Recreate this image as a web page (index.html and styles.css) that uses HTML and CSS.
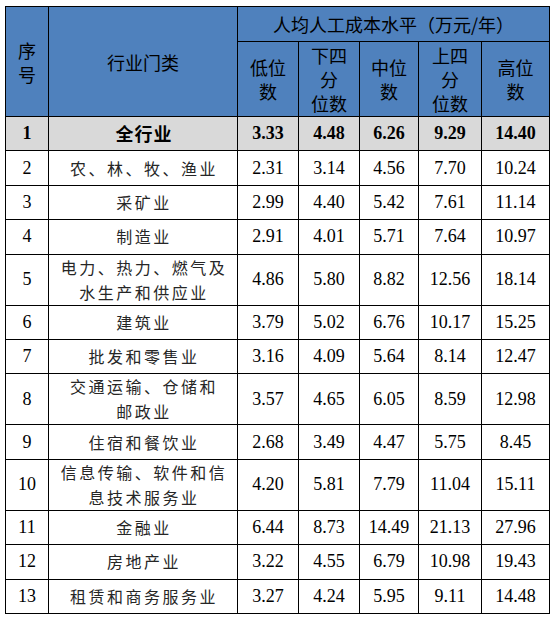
FILE: index.html
```html
<!DOCTYPE html>
<html lang="zh-CN">
  <head>
    <meta charset="UTF-8" />
    <title>人均人工成本水平</title>
    <link rel="stylesheet" href="styles.css">
  </head>
  <body>
    <!-- Labour cost table by industry -->
    <table class="cost-table">
      <colgroup>
        <col class="c-no" />
        <col class="c-name" />
        <col class="c-v1" />
        <col class="c-v2" />
        <col class="c-v3" />
        <col class="c-v4" />
        <col class="c-v5" />
      </colgroup>
      <thead>
        <tr class="head-top">
          <th rowspan="2">序<br>号</th>
          <th rowspan="2">行业门类</th>
          <th colspan="5">人均人工成本水平（万元/年）</th>
        </tr>
        <tr class="head-sub">
          <th>低位<br>数</th>
          <th>下四<br>分<br>位数</th>
          <th>中位<br>数</th>
          <th>上四<br>分<br>位数</th>
          <th>高位<br>数</th>
        </tr>
      </thead>
      <tbody>
        <tr class="total">
          <td>1</td><td class="name">全行业</td>
          <td>3.33</td><td>4.48</td><td>6.26</td><td>9.29</td><td>14.40</td>
        </tr>
        <tr>
          <td>2</td><td class="name">农、林、牧、渔业</td>
          <td>2.31</td><td>3.14</td><td>4.56</td><td>7.70</td><td>10.24</td>
        </tr>
        <tr>
          <td>3</td><td class="name">采矿业</td>
          <td>2.99</td><td>4.40</td><td>5.42</td><td>7.61</td><td>11.14</td>
        </tr>
        <tr>
          <td>4</td><td class="name">制造业</td>
          <td>2.91</td><td>4.01</td><td>5.71</td><td>7.64</td><td>10.97</td>
        </tr>
        <tr>
          <td>5</td><td class="name">电力、热力、燃气及<br>水生产和供应业</td>
          <td>4.86</td><td>5.80</td><td>8.82</td><td>12.56</td><td>18.14</td>
        </tr>
        <tr>
          <td>6</td><td class="name">建筑业</td>
          <td>3.79</td><td>5.02</td><td>6.76</td><td>10.17</td><td>15.25</td>
        </tr>
        <tr>
          <td>7</td><td class="name">批发和零售业</td>
          <td>3.16</td><td>4.09</td><td>5.64</td><td>8.14</td><td>12.47</td>
        </tr>
        <tr>
          <td>8</td><td class="name">交通运输、仓储和<br>邮政业</td>
          <td>3.57</td><td>4.65</td><td>6.05</td><td>8.59</td><td>12.98</td>
        </tr>
        <tr>
          <td>9</td><td class="name">住宿和餐饮业</td>
          <td>2.68</td><td>3.49</td><td>4.47</td><td>5.75</td><td>8.45</td>
        </tr>
        <tr>
          <td>10</td><td class="name">信息传输、软件和信<br>息技术服务业</td>
          <td>4.20</td><td>5.81</td><td>7.79</td><td>11.04</td><td>15.11</td>
        </tr>
        <tr>
          <td>11</td><td class="name">金融业</td>
          <td>6.44</td><td>8.73</td><td>14.49</td><td>21.13</td><td>27.96</td>
        </tr>
        <tr>
          <td>12</td><td class="name">房地产业</td>
          <td>3.22</td><td>4.55</td><td>6.79</td><td>10.98</td><td>19.43</td>
        </tr>
        <tr>
          <td>13</td><td class="name">租赁和商务服务业</td>
          <td>3.27</td><td>4.24</td><td>5.95</td><td>9.11</td><td>14.48</td>
        </tr>
      </tbody>
    </table>
  </body>
</html>
```
FILE: styles.css
```css
/* Page */
body {
  margin: 6px 0 0 5px;
  background: #ffffff;
}

/* Table frame */
.cost-table {
  border-collapse: collapse;
  table-layout: fixed;
  width: 545px;
  font-family: "Liberation Serif", "Noto Sans CJK SC", serif;
  font-size: 18px;
  color: #000;
}

.c-no { width: 43px; }
.c-name { width: 189px; }
.c-v1 { width: 61px; }
.c-v2 { width: 61px; }
.c-v3 { width: 59px; }
.c-v4 { width: 63px; }
.c-v5 { width: 68px; }

.cost-table th,
.cost-table td {
  border: 1px solid #000;
  padding: 0;
  text-align: center;
  vertical-align: middle;
}

/* Header */
.cost-table th {
  background: #4f81bd;
  font-family: "Noto Sans CJK SC", sans-serif;
  font-weight: normal;
  font-size: 18px;
  line-height: 24px;
}

.head-top {
  height: 35px;
}

.head-sub {
  height: 75px;
}

/* Body rows */
.cost-table td {
  height: 33.4px;
  line-height: 25px;
}

.cost-table td.name {
  font-family: "Noto Sans CJK SC", sans-serif;
  font-size: 16px;
  letter-spacing: 2.5px;
  color: #262626;
  padding-left: 2px;
}

/* Totals row */
.total td {
  background: #d9d9d9;
  font-weight: bold;
}

.total td.name {
  color: #000;
  letter-spacing: 1px;
  font-size: 18px;
}
```
